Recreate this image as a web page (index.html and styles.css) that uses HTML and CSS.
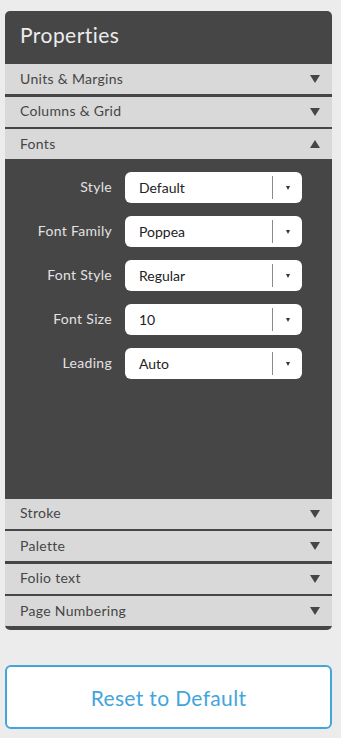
FILE: index.html
```html
<!DOCTYPE html>
<html>
<head>
<meta charset="utf-8">
<link rel="stylesheet" href="styles.css">
</head>
<body>
<div class="page">
  <div class="panel">
    <div class="title">Properties</div>
    <div class="sections">
      <div class="row"><span>Units &amp; Margins</span><span class="tri down"></span></div>
      <div class="row"><span>Columns &amp; Grid</span><span class="tri down"></span></div>
      <div class="row"><span>Fonts</span><span class="tri up"></span></div>
      <div class="content">
        <div class="form">
          <label class="lbl">Style</label>
          <div class="select"><span class="val">Default</span><span class="div"></span><span class="arr"></span></div>
          <label class="lbl">Font Family</label>
          <div class="select"><span class="val">Poppea</span><span class="div"></span><span class="arr"></span></div>
          <label class="lbl">Font Style</label>
          <div class="select"><span class="val">Regular</span><span class="div"></span><span class="arr"></span></div>
          <label class="lbl">Font Size</label>
          <div class="select"><span class="val">10</span><span class="div"></span><span class="arr"></span></div>
          <label class="lbl">Leading</label>
          <div class="select"><span class="val">Auto</span><span class="div"></span><span class="arr"></span></div>
        </div>
      </div>
      <div class="row"><span>Stroke</span><span class="tri down"></span></div>
      <div class="row"><span>Palette</span><span class="tri down"></span></div>
      <div class="row"><span>Folio text</span><span class="tri down"></span></div>
      <div class="row"><span>Page Numbering</span><span class="tri down"></span></div>
    </div>
  </div>
  <button class="reset">Reset to Default</button>
</div>
</body>
</html>
```
FILE: styles.css
```css
html, body {
  margin: 0;
  padding: 0;
  background: #ececec;
  font-family: Lato, "Open Sans", "Liberation Sans", sans-serif;
}
.page {
  padding: 11px 9px 0 5px;
  display: flex;
  flex-direction: column;
  gap: 35px;
}
.panel {
  width: 327px;
  background: #464646;
  border-radius: 5px;
  overflow: hidden;
  padding-bottom: 4px;
}
.title {
  height: 53px;
  box-sizing: border-box;
  padding: 11px 0 0 15px;
  color: #ececec;
  font-size: 21px;
  letter-spacing: 0.45px;
  line-height: 26px;
}
.sections {
  display: flex;
  flex-direction: column;
  gap: 2.5px;
}
.row {
  height: 30px;
  box-sizing: border-box;
  background: #d9d9d9;
  color: #464646;
  font-size: 14px;
  letter-spacing: 0.3px;
  display: flex;
  align-items: center;
  justify-content: space-between;
  padding: 0 12px 2px 15px;
}
.tri {
  width: 0;
  height: 0;
  margin-top: 2px;
  border-left: 5px solid transparent;
  border-right: 5px solid transparent;
}
.tri.down { border-top: 8px solid #464646; }
.tri.up { border-bottom: 8px solid #464646; }
.content {
  height: 337px;
  margin: -2.5px 0 0;
  padding-top: 13px;
  box-sizing: border-box;
}
.form {
  display: grid;
  grid-template-columns: 107px 177px;
  column-gap: 13px;
  row-gap: 13px;
  align-items: center;
}
.lbl {
  text-align: right;
  color: #e2e2e2;
  font-size: 14px;
  letter-spacing: 0.3px;
  margin-top: -2px;
}
.select {
  height: 31px;
  background: #fff;
  border-radius: 6px;
  display: flex;
  align-items: center;
  padding-left: 14px;
  font-size: 14px;
  color: #222;
}
.val { flex: 1; }
.div {
  width: 1px;
  align-self: stretch;
  margin: 4px 0;
  background: #8a8a8a;
}
.arr {
  width: 0;
  height: 0;
  margin: 0 12px 0 13px;
  border-left: 2.5px solid transparent;
  border-right: 2.5px solid transparent;
  border-top: 4px solid #333;
}
.reset {
  width: 327px;
  height: 64px;
  background: #fff;
  border: 2px solid #42a5dc;
  border-radius: 6px;
  color: #42a5dc;
  font-family: Lato, "Open Sans", "Liberation Sans", sans-serif;
  font-size: 21px;
  letter-spacing: 0.35px;
  padding: 0;
}
```
